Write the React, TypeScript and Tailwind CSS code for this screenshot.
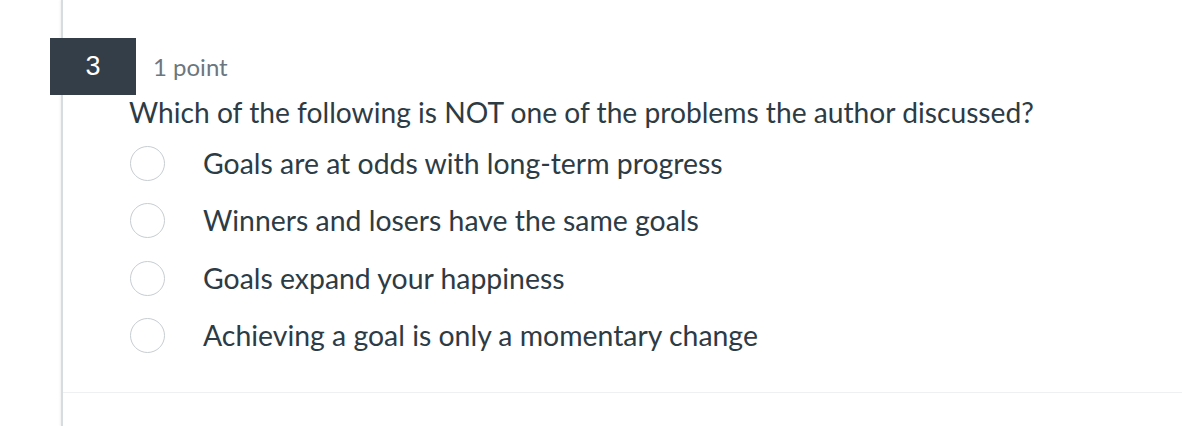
const options = [
  "Goals are at odds with long-term progress",
  "Winners and losers have the same goals",
  "Goals expand your happiness",
  "Achieving a goal is only a momentary change",
]

const Radio = () => (
  <span className="block h-[35px] w-[35px] shrink-0 rounded-full border border-[#c7cdd1] bg-white" />
)

export default function App() {
  return (
    <div className="h-[426px] w-[1182px] overflow-hidden bg-white font-['Lato',sans-serif] text-[#2d3b45]">
      <div className="ml-[61px] flex h-full flex-col border-l-2 border-[#d7dcdf] shadow-[-1px_0_2px_rgba(0,0,0,0.06)]">
        <div className="pt-[38px]">
          <div className="flex items-center">
            <div className="-ml-[13px] flex h-[57px] w-[86px] items-center justify-center bg-[#333e48] font-['Liberation_Sans',sans-serif] text-[27px] text-white">
              3
            </div>
            <span className="ml-[17px] text-[24px] text-[#6b7780]">1 point</span>
          </div>
          <div className="ml-[66px] text-[28.2px] leading-[34px]">
            Which of the following is NOT one of the problems the author discussed?
          </div>
          <ul className="ml-[67px] mt-[16px] flex flex-col gap-[21.5px]">
            {options.map((o) => (
              <li key={o} className="flex h-[36px] items-center">
                <Radio />
                <span className="ml-[38px] text-[28.4px]">{o}</span>
              </li>
            ))}
          </ul>
        </div>
        <div className="mt-auto mb-[33px] border-t border-[#eef0f1]" />
      </div>
    </div>
  )
}
